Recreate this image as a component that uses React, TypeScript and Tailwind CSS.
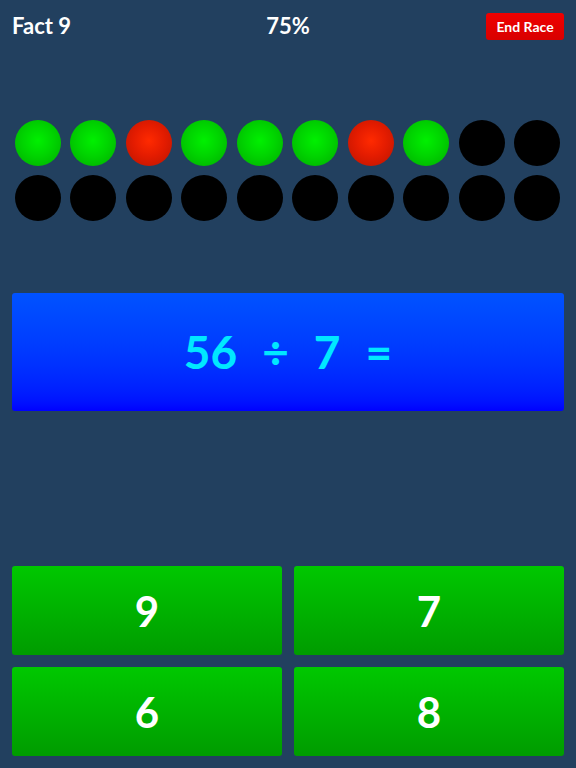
import React from 'react';

// Race screen: progress dots, the current fact and four answer buttons

type Dot = 'right' | 'wrong' | 'open';

const ROW_ONE: Dot[] = ['right', 'right', 'wrong', 'right', 'right', 'right', 'wrong', 'right', 'open', 'open'];
const ROW_TWO: Dot[] = Array(10).fill('open');

const DOT_CLASS: Record<Dot, string> = {
  right: 'bg-[radial-gradient(circle_at_50%_45%,#00f000_0%,#00d400_45%,#00ac00_100%)]',
  wrong: 'bg-[radial-gradient(circle_at_50%_45%,#ff2a00_0%,#e41c00_45%,#b81400_100%)]',
  open:  'bg-black',
};

const ANSWERS = [9, 7, 6, 8];

function DotRow({ dots }: { dots: Dot[] }) {
  return (
    <div className="flex justify-between pl-[15px] pr-[16px]">
      {dots.map((d, i) => (
        <div key={i} className={`w-[46px] h-[46px] rounded-full ${DOT_CLASS[d]}`}/>
      ))}
    </div>
  );
}

export default function App() {
  return (
    <div
      className="h-[768px] w-full bg-[#22405f] flex flex-col text-white"
      style={{ fontFamily: 'Lato, "Noto Sans", sans-serif' }}
    >
      {/* Header */}
      <div className="h-[52px] grid grid-cols-3 items-center px-3">
        <div className="text-[22px] font-bold leading-none">Fact 9</div>
        <div className="text-[22px] font-bold leading-none text-center">75%</div>
        <div className="flex justify-end">
          <button className="h-[27px] w-[78px] rounded-[3px] bg-gradient-to-b from-[#f00000] to-[#d80000] text-[14px] font-bold">
            End Race
          </button>
        </div>
      </div>

      {/* Progress */}
      <div className="mt-[68px] flex flex-col gap-[9px]">
        <DotRow dots={ROW_ONE}/>
        <DotRow dots={ROW_TWO}/>
      </div>

      {/* Fact */}
      <div className="mt-[72px] mx-3 h-[118px] rounded-[3px] bg-gradient-to-b from-[#0052ff] to-[#0000ff] flex items-center justify-center">
        <div className="text-[46px] font-bold text-[#00e8ff] leading-none flex gap-[25px]">
          <span>56</span><span>÷</span><span>7</span><span>=</span>
        </div>
      </div>

      {/* Answers */}
      <div className="mt-auto grid grid-cols-2 gap-3 px-3 pb-3">
        {ANSWERS.map(a => (
          <button key={a}
            className="h-[89px] rounded-[3px] bg-gradient-to-b from-[#00c800] to-[#009c00] text-[42px] font-bold leading-none">
            {a}
          </button>
        ))}
      </div>
    </div>
  );
}
